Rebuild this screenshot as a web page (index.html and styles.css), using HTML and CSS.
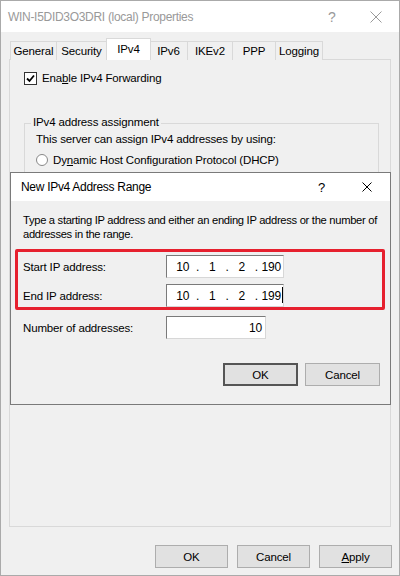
FILE: index.html
```html
<!DOCTYPE html>
<html>
<head>
<meta charset="utf-8">
<link rel="stylesheet" href="styles.css">
</head>
<body>
<div class="window">
  <div class="titlebar">
    <span class="title">WIN-I5DID3O3DRI (local) Properties</span>
    <span class="tb-help">?</span>
    <span class="tb-close"><svg width="12" height="12" viewBox="0 0 12 12"><path d="M0.5 0.5L11.5 11.5M11.5 0.5L0.5 11.5" stroke="#9a9a9a" stroke-width="1"/></svg></span>
  </div>
  <div class="tabs">
    <div class="tab t-general">General</div>
    <div class="tab t-security">Security</div>
    <div class="tab sel t-ipv4">IPv4</div>
    <div class="tab t-ipv6">IPv6</div>
    <div class="tab t-ikev2">IKEv2</div>
    <div class="tab t-ppp">PPP</div>
    <div class="tab t-logging">Logging</div>
  </div>
  <div class="panel">
    <div class="check-row">
      <span class="checkbox"><svg width="9" height="9" viewBox="0 0 9 9"><path d="M1 4.5L3.5 7L8 1.5" fill="none" stroke="#000" stroke-width="1.8"/></svg></span>
      <span>Ena<u>b</u>le IPv4 Forwarding</span>
    </div>
    <div class="group">
      <div class="legend">IPv4 address assignment</div>
      <div class="g-text">This server can assign IPv4 addresses by using:</div>
      <div class="radio-row"><span class="radio"></span><span>Dy<u>n</u>amic Host Configuration Protocol (DHCP)</span></div>
    </div>
  </div>
  <div class="footer">
    <div class="btn">OK</div>
    <div class="btn">Cancel</div>
    <div class="btn"><u>A</u>pply</div>
  </div>

  <div class="dialog">
    <div class="d-titlebar">
      <span class="d-title">New IPv4 Address Range</span>
      <span class="d-help">?</span>
      <span class="d-close"><svg width="10" height="10" viewBox="0 0 10 10"><path d="M0.5 0.5L9.5 9.5M9.5 0.5L0.5 9.5" stroke="#000" stroke-width="1"/></svg></span>
    </div>
    <div class="d-body">
      <p class="d-text">Type a starting IP address and either an ending IP address or the number of addresses in the range.</p>
      <div class="highlight">
        <div class="field-row">
          <span class="label">Start IP address:</span>
          <div class="ipbox"><span class="oct">10</span><span class="dot">.</span><span class="oct">1</span><span class="dot">.</span><span class="oct">2</span><span class="dot">.</span><span class="oct">190</span></div>
        </div>
        <div class="field-row">
          <span class="label">End IP address:</span>
          <div class="ipbox"><span class="oct">10</span><span class="dot">.</span><span class="oct">1</span><span class="dot">.</span><span class="oct">2</span><span class="dot">.</span><span class="oct last">199<span class="caret"></span></span></div>
        </div>
      </div>
      <div class="field-row num-row">
        <span class="label">Number of addresses:</span>
        <div class="numbox">10</div>
      </div>
      <div class="d-buttons">
        <div class="btn def">OK</div>
        <div class="btn">Cancel</div>
      </div>
    </div>
  </div>
</div>
</body>
</html>
```
FILE: styles.css
```css
* { box-sizing: border-box; }
html, body { margin: 0; padding: 0; }
body {
  font-family: "Liberation Sans", Arial, sans-serif;
  font-size: 11.5px;
  letter-spacing: -0.15px;
  color: #000;
  background: #f0f0f0;
}
.window {
  position: relative;
  width: 400px;
  height: 576px;
  background: #f0f0f0;
  border: 1px solid #aaaaaa;
  overflow: hidden;
}
.titlebar {
  height: 31px;
  background: #fff;
  display: flex;
  align-items: center;
  padding-left: 7px;
}
.title {
  color: #999;
  font-size: 12px;
  letter-spacing: -0.3px;
  flex: 1;
}
.tb-help {
  color: #999;
  font-size: 14px;
  width: 42px;
}
.tb-close {
  width: 29px;
  display: flex;
}
.tabs {
  display: flex;
  padding-left: 9px;
  margin-top: 6px;
  height: 21px;
  align-items: flex-end;
  position: relative;
  z-index: 1;
}
.tab {
  height: 19px;
  border: 1px solid #d9d9d9;
  border-bottom: none;
  border-left: none;
  background: #f0f0f0;
  display: flex;
  align-items: center;
  justify-content: center;
  margin-bottom: -1px;
}
.tab:first-child { border-left: 1px solid #d9d9d9; }
.t-general { width: 47px; }
.t-security { width: 50px; }
.t-ipv4 { width: 45px; }
.t-ipv6 { width: 38px; }
.t-ikev2 { width: 45px; }
.t-ppp { width: 43px; }
.t-logging { width: 47px; }
.tab.sel {
  height: 22px;
  background: #fff;
  border-left: 1px solid #d9d9d9;
  margin-left: -1px;
  margin-right: -1px;
  padding-bottom: 2px;
  position: relative;
  z-index: 2;
}
.panel {
  margin: 0 8px;
  height: 468px;
  border: 1px solid #d9d9d9;
  background: #f0f0f0;
  padding: 8px 0 0 14px;
}
.check-row {
  display: flex;
  align-items: center;
  gap: 5px;
  height: 20px;
}
.checkbox {
  width: 13px;
  height: 13px;
  border: 1px solid #333;
  background: #fff;
  display: flex;
  align-items: center;
  justify-content: center;
}
.group {
  margin-top: 35px;
  width: 355px;
  height: 80px;
  border: 1px solid #d9d9d9;
  position: relative;
  padding: 9px 0 0 11px;
}
.legend {
  position: absolute;
  top: -8px;
  left: 6px;
  padding: 0 2px;
  background: #f0f0f0;
}
.g-text { height: 18px; }
.radio-row {
  display: flex;
  align-items: center;
  gap: 5px;
  height: 18px;
}
.radio {
  width: 12px;
  height: 12px;
  border-radius: 50%;
  border: 1px solid #888;
  background: #fff;
}
.footer {
  display: flex;
  justify-content: flex-end;
  gap: 9px;
  padding: 18px 7px 0 0;
}
.btn {
  width: 73px;
  height: 23px;
  background: #e1e1e1;
  border: 1px solid #adadad;
  display: flex;
  align-items: center;
  justify-content: center;
}
.dialog {
  position: absolute;
  left: 9px;
  top: 171px;
  width: 381px;
  height: 233px;
  border: 1px solid #7a7a7a;
  background: #f0f0f0;
  z-index: 5;
}
.d-titlebar {
  height: 28px;
  background: #fff;
  display: flex;
  align-items: center;
  padding-left: 10px;
}
.d-title { flex: 1; font-size: 12px; letter-spacing: -0.3px; }
.d-help { width: 44px; font-size: 13px; }
.d-close { width: 28px; display: flex; }
.d-body { padding: 12px 4px 0 4px; }
.d-text {
  margin: 0 0 0 8px;
  line-height: 14px;
  font-size: 11.2px;
  letter-spacing: -0.3px;
}
.highlight {
  margin-top: 8px;
  width: 370px;
  height: 61px;
  border: 3px solid #e6202e;
  border-radius: 2px;
  padding: 3px 0 0 5px;
}
.field-row {
  display: flex;
  align-items: center;
  height: 23px;
  margin-bottom: 6px;
}
.highlight .field-row:last-child { margin-bottom: 0; }
.label { width: 143px; }
.ipbox, .numbox {
  height: 23px;
  background: #fff;
  border: 1px solid #7a7a7a;
  border-right-color: #d7d7d7;
  border-bottom-color: #d7d7d7;
}
.ipbox {
  width: 118px;
  display: flex;
  align-items: center;
  padding-left: 4px;
  font-size: 12px;
}
.oct { width: 24px; text-align: center; position: relative; }
.dot { width: 6px; text-align: center; }
.caret {
  position: absolute;
  right: 0;
  top: -2px;
  width: 1px;
  height: 16px;
  background: #000;
}
.num-row { margin-top: 6px; padding-left: 8px; }
.numbox {
  width: 100px;
  text-align: right;
  padding: 4px 3px 0 0;
  font-size: 12px;
}
.d-buttons {
  display: flex;
  justify-content: flex-end;
  gap: 7px;
  margin-top: 24px;
  padding-right: 6px;
}
.d-buttons .btn { width: 75px; }
.btn.def { border: 2px solid #555; }
```
